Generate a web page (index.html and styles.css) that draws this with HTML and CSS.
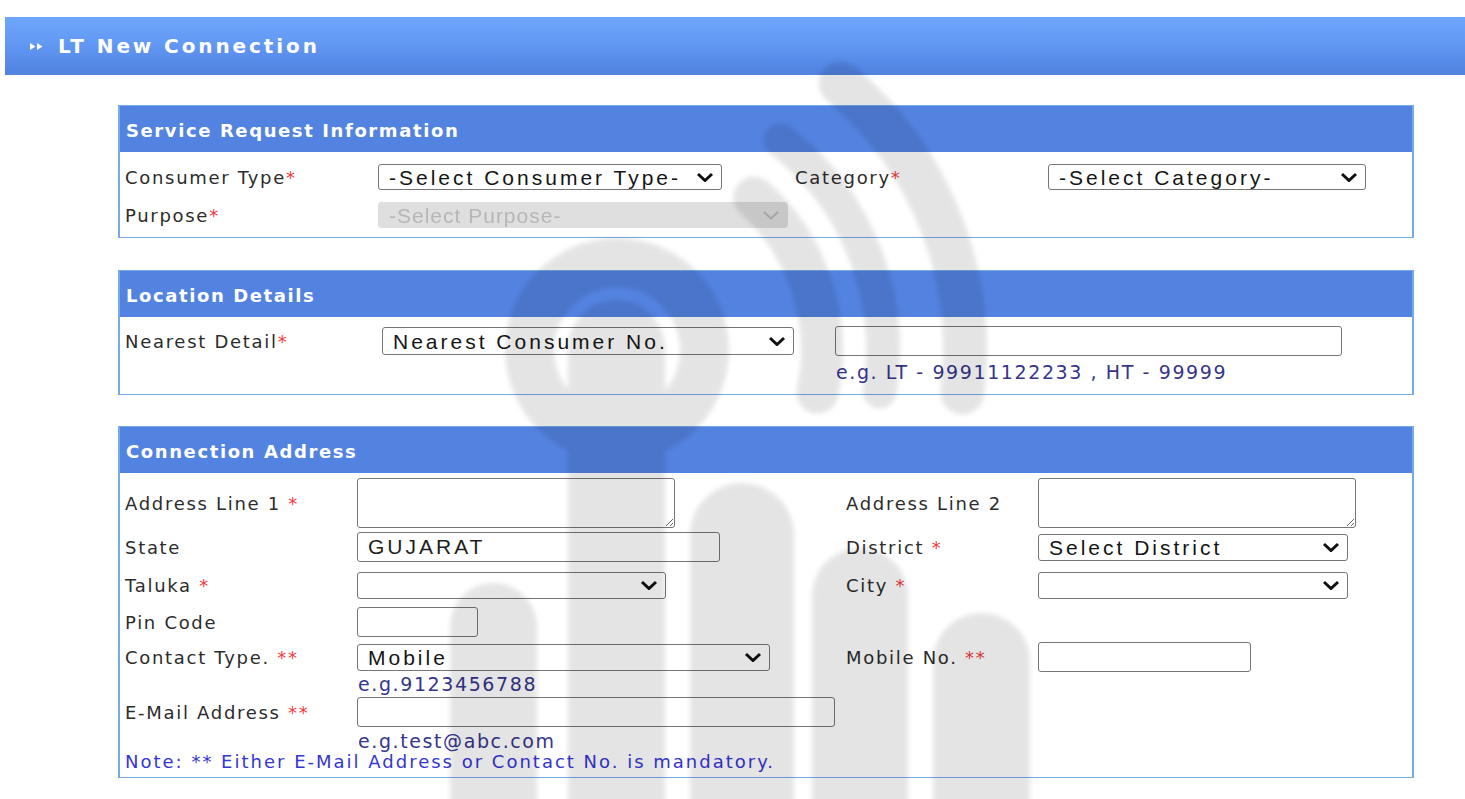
FILE: index.html
```html
<!DOCTYPE html>
<html lang="en">
<head>
<meta charset="utf-8">
<title>LT New Connection</title>
<link rel="stylesheet" href="styles.css">
</head>
<body>
<div class="page-title">
  <svg class="title-icon" viewBox="0 0 14 7" aria-hidden="true"><polygon points="0,0 5.5,3.5 0,7"/><polygon points="7,0 12.5,3.5 7,7"/></svg>
  <span class="title-text">LT New Connection</span>
</div>

<main class="content">
  <section class="panel">
    <div class="panel-head">Service Request Information</div>
    <div class="panel-body grid-service">
      <label class="lbl" for="ctype">Consumer Type<span class="req">*</span></label>
      <span class="sel w344 h26"><select id="ctype"><option>-Select Consumer Type-</option></select><svg class="chev" viewBox="0 0 18 10"><path d="M2 2 L9 8.5 L16 2"/></svg></span>
      <label class="lbl" for="cat">Category<span class="req">*</span></label>
      <span class="sel w318 h26"><select id="cat"><option>-Select Category-</option></select><svg class="chev" viewBox="0 0 18 10"><path d="M2 2 L9 8.5 L16 2"/></svg></span>
      <label class="lbl" for="purp">Purpose<span class="req">*</span></label>
      <span class="sel sel-disabled w410 h26"><select id="purp" disabled><option>-Select Purpose-</option></select><svg class="chev" viewBox="0 0 18 10"><path d="M2 2 L9 8.5 L16 2"/></svg></span>
    </div>
  </section>

  <section class="panel panel-location">
    <div class="panel-head">Location Details</div>
    <div class="panel-body grid-location">
      <label class="lbl" for="near">Nearest Detail<span class="req">*</span></label>
      <span class="sel w412 h28"><select id="near"><option>Nearest Consumer No.</option></select><svg class="chev" viewBox="0 0 18 10"><path d="M2 2 L9 8.5 L16 2"/></svg></span>
      <input class="inp w507" type="text" aria-label="Nearest number">
      <span class="hint hint-location">e.g. LT - 99911122233 , HT - 99999</span>
    </div>
  </section>

  <section class="panel panel-address">
    <div class="panel-head">Connection Address</div>
    <div class="panel-body grid-address">
      <label class="lbl row-start" for="addr1">Address Line 1 <span class="req">*</span></label>
      <textarea class="ta" id="addr1"></textarea>
      <label class="lbl" for="addr2">Address Line 2</label>
      <textarea class="ta" id="addr2"></textarea>

      <label class="lbl row-start" for="state">State</label>
      <input class="inp w363" id="state" type="text" value="GUJARAT">
      <label class="lbl" for="dist">District <span class="req">*</span></label>
      <span class="sel w310 h27"><select id="dist"><option>Select District</option></select><svg class="chev" viewBox="0 0 18 10"><path d="M2 2 L9 8.5 L16 2"/></svg></span>

      <label class="lbl row-start" for="taluka">Taluka <span class="req">*</span></label>
      <span class="sel w309 h27"><select id="taluka"><option></option></select><svg class="chev" viewBox="0 0 18 10"><path d="M2 2 L9 8.5 L16 2"/></svg></span>
      <label class="lbl" for="city">City <span class="req">*</span></label>
      <span class="sel w310 h27"><select id="city"><option></option></select><svg class="chev" viewBox="0 0 18 10"><path d="M2 2 L9 8.5 L16 2"/></svg></span>

      <label class="lbl row-start" for="pin">Pin Code</label>
      <input class="inp w121" id="pin" type="text">

      <label class="lbl row-start" for="contact">Contact Type. <span class="req">**</span></label>
      <span class="sel w413 h27"><select id="contact"><option>Mobile</option></select><svg class="chev" viewBox="0 0 18 10"><path d="M2 2 L9 8.5 L16 2"/></svg></span>
      <label class="lbl" for="mobile">Mobile No. <span class="req">**</span></label>
      <input class="inp w213" id="mobile" type="text">

      <span class="hint col-2">e.g.9123456788</span>

      <label class="lbl row-start" for="email">E-Mail Address <span class="req">**</span></label>
      <input class="inp w478" id="email" type="text">

      <span class="hint col-2">e.g.test@abc.com</span>

      <p class="note">Note: ** Either E-Mail Address or Contact No. is mandatory.</p>
    </div>
  </section>
</main>

<svg class="watermark" viewBox="0 0 1465 799" aria-hidden="true">
  <defs>
    <filter id="soft" x="-5%" y="-5%" width="110%" height="110%"><feGaussianBlur stdDeviation="2.4"/></filter>
  </defs>
  <g opacity="0.1" filter="url(#soft)">
    <path fill-rule="evenodd" d="M505 350a112 112 0 1 0 224 0a112 112 0 1 0 -224 0Z M554 350a63 63 0 1 0 126 0a63 63 0 1 0 -126 0Z"/>
    <path d="M568 810V348.5A48.5 48.5 0 0 1 665 348.5V810Z"/>
    <path d="M450 810V626.5A43.5 43.5 0 0 1 537 626.5V810Z"/>
    <path d="M690 810V535A52 52 0 0 1 794 535V810Z"/>
    <path d="M812 810V596A48 48 0 0 1 908 596V810Z"/>
    <path d="M933 810V661.5A48.5 48.5 0 0 1 1030 661.5V810Z"/>
    <g fill="none" stroke="#000" stroke-linecap="round">
      <path stroke-width="42" d="M754.2 197.7A205 205 0 0 1 817.5 392.6"/>
      <path stroke-width="34" d="M780.8 140.4A266 266 0 0 1 879.7 391.6"/>
      <path stroke-width="44" d="M840.7 83.4A348 348 0 0 1 962.4 392.4"/>
    </g>
  </g>
</svg>
</body>
</html>
```

FILE: styles.css
```css
* {
  box-sizing: border-box;
}

html, body {
  background: #ffffff;
}

body {
  margin: 0;
  font-family: "DejaVu Sans", Verdana, sans-serif;
  color: #303030;
}

/* ---------- page title bar ---------- */
.page-title {
  margin: 17px 0 0 5px;
  height: 58px;
  display: flex;
  align-items: center;
  padding-left: 25px;
  background: linear-gradient(#6ea5fc 0%, #6299f3 45%, #5587e6 85%, #5082de 100%);
  color: #ffffff;
}

.title-icon {
  width: 14px;
  height: 7px;
  margin-right: 14px;
  fill: #ffffff;
}

.title-text {
  font-weight: bold;
  font-size: 20px;
  letter-spacing: 2.9px;
}

/* ---------- panels ---------- */
.content {
  padding-left: 118px;
  width: 1414px;
}

.panel {
  margin-top: 30px;
  border: 1px solid #76abea;
  border-left-width: 2px;
  border-right-width: 2px;
}

.panel-location {
  margin-top: 32px;
}

.panel-address {
  margin-top: 31px;
}

.panel-head {
  height: 46px;
  display: flex;
  align-items: center;
  padding: 2px 0 0 6px;
  background: #5383e0;
  color: #ffffff;
  font-weight: bold;
  font-size: 18px;
  letter-spacing: 1.6px;
}

.panel-body {
  display: grid;
  align-items: center;
  justify-items: start;
}

.grid-service {
  grid-template-columns: 253px 417px 253px auto;
  grid-template-rows: 26px 26px;
  row-gap: 12px;
  padding: 12px 0 9px 5px;
}

.grid-location {
  grid-template-columns: 257px 453px auto;
  grid-template-rows: 30px 20px;
  row-gap: 6px;
  padding: 9px 0 12px 5px;
}

.grid-address {
  grid-template-columns: 232px 489px 192px auto;
  grid-template-rows: 50px 38px 38px 36px 34px 20px 36px 22px 20px;
  padding: 5px 0 5px 5px;
}

.row-start {
  grid-column: 1;
}

.col-2 {
  grid-column: 2;
}

/* ---------- labels & texts ---------- */
.lbl {
  font-size: 18px;
  letter-spacing: 1.7px;
  color: #2c2c2c;
  white-space: nowrap;
  line-height: 1.2;
  padding-top: 2px;
}

.req {
  color: #f03c3c;
}

.hint {
  font-size: 19px;
  letter-spacing: 1.6px;
  color: #35358c;
  white-space: nowrap;
  line-height: 1.1;
  margin-left: 1px;
}

.hint-location {
  grid-column: 3;
}

.note {
  grid-column: 1 / -1;
  margin: 0;
  font-size: 18px;
  letter-spacing: 2px;
  color: #3535d4;
  white-space: nowrap;
  line-height: 1.1;
}

/* ---------- form controls ---------- */
.sel {
  display: flex;
  align-items: center;
  border: 1px solid #767676;
  border-radius: 3px;
  background: #ffffff;
}

.sel select {
  -webkit-appearance: none;
  appearance: none;
  flex: 1;
  min-width: 0;
  height: 100%;
  margin: 0;
  border: 0;
  outline: none;
  background: transparent;
  padding: 0 0 0 10px;
  font-family: "Liberation Sans", Arial, sans-serif;
  font-size: 21px;
  letter-spacing: 3px;
  color: #151515;
}

.chev {
  flex: none;
  width: 18px;
  height: 10px;
  margin-right: 7px;
  fill: none;
  stroke: #111111;
  stroke-width: 3;
}

.sel-disabled {
  background: #dfdfdf;
  border-color: #dfdfdf;
}

.sel-disabled select {
  color: #a6a6a6;
  letter-spacing: 1px;
}

.sel-disabled .chev {
  stroke: #b8b8b8;
  stroke-width: 1.8;
}

.inp {
  height: 30px;
  margin: 0;
  border: 1px solid #767676;
  border-radius: 3px;
  padding: 0 10px;
  font-family: "Liberation Sans", Arial, sans-serif;
  font-size: 21px;
  letter-spacing: 3px;
  color: #1e1e1e;
  background: #ffffff;
}

.ta {
  width: 318px;
  height: 50px;
  margin: 0;
  border: 1px solid #767676;
  border-radius: 3px;
  resize: both;
  font-family: "Liberation Sans", Arial, sans-serif;
  font-size: 16px;
}

.h26 { height: 26px; }
.h27 { height: 27px; }
.h28 { height: 28px; }

.w121 { width: 121px; }
.w213 { width: 213px; }
.w309 { width: 309px; }
.w310 { width: 310px; }
.w318 { width: 318px; }
.w344 { width: 344px; }
.w363 { width: 363px; }
.w410 { width: 410px; }
.w412 { width: 412px; }
.w413 { width: 413px; }
.w478 { width: 478px; }
.w507 { width: 507px; }

/* ---------- background logo watermark (overlay) ---------- */
.watermark {
  position: absolute;
  left: 0;
  top: 0;
  width: 1465px;
  height: 799px;
  pointer-events: none;
}
```
